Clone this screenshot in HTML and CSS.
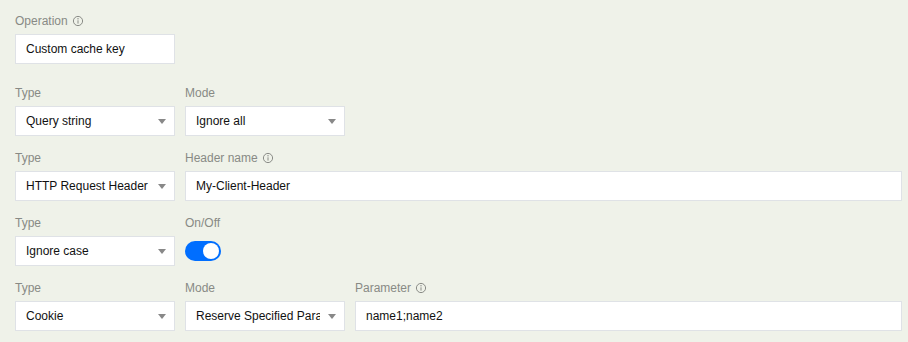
FILE: index.html
```html
<!DOCTYPE html>
<html>
<head>
<meta charset="utf-8">
<link rel="stylesheet" href="styles.css">
</head>
<body>
<div class="form">
  <div class="row row-op">
    <div class="field w160">
      <div class="label">Operation <svg class="info" viewBox="0 0 12 12"><circle cx="6" cy="6" r="4.6"/><line x1="6" y1="5.3" x2="6" y2="8.6"/><circle class="dot" cx="6" cy="3.7" r="0.7"/></svg></div>
      <div class="box">Custom cache key</div>
    </div>
  </div>

  <div class="row">
    <div class="field w160">
      <div class="label">Type</div>
      <div class="box select"><span class="val">Query string</span><span class="caret"></span></div>
    </div>
    <div class="field w160">
      <div class="label">Mode</div>
      <div class="box select"><span class="val">Ignore all</span><span class="caret"></span></div>
    </div>
  </div>

  <div class="row">
    <div class="field w160">
      <div class="label">Type</div>
      <div class="box select"><span class="val">HTTP Request Header</span><span class="caret"></span></div>
    </div>
    <div class="field grow">
      <div class="label">Header name <svg class="info" viewBox="0 0 12 12"><circle cx="6" cy="6" r="4.6"/><line x1="6" y1="5.3" x2="6" y2="8.6"/><circle class="dot" cx="6" cy="3.7" r="0.7"/></svg></div>
      <div class="box">My-Client-Header</div>
    </div>
  </div>

  <div class="row">
    <div class="field w160">
      <div class="label">Type</div>
      <div class="box select"><span class="val">Ignore case</span><span class="caret"></span></div>
    </div>
    <div class="field w160">
      <div class="label">On/Off</div>
      <div class="switch-wrap"><span class="switch"><span class="knob"></span></span></div>
    </div>
  </div>

  <div class="row">
    <div class="field w160">
      <div class="label">Type</div>
      <div class="box select"><span class="val">Cookie</span><span class="caret"></span></div>
    </div>
    <div class="field w160">
      <div class="label">Mode</div>
      <div class="box select"><span class="val">Reserve Specified Parameters</span><span class="caret"></span></div>
    </div>
    <div class="field grow">
      <div class="label">Parameter <svg class="info" viewBox="0 0 12 12"><circle cx="6" cy="6" r="4.6"/><line x1="6" y1="5.3" x2="6" y2="8.6"/><circle class="dot" cx="6" cy="3.7" r="0.7"/></svg></div>
      <div class="box">name1;name2</div>
    </div>
  </div>
</div>
</body>
</html>
```

FILE: styles.css
```css
html, body {
  margin: 0;
  padding: 0;
  background: #eff2e9;
  font-family: "Liberation Sans", Arial, Helvetica, sans-serif;
  font-size: 12px;
  color: #000;
}
.form {
  padding: 12px 6px 0 15px;
  display: flex;
  flex-direction: column;
  gap: 13px;
}
.row {
  display: flex;
  gap: 10px;
}
.row-op {
  margin-bottom: 7px;
}
.field {
  display: flex;
  flex-direction: column;
  gap: 4px;
}
.w160 { width: 160px; flex: none; }
.grow { flex: 1; min-width: 0; }
.label {
  height: 18px;
  line-height: 18px;
  color: #888a85;
  display: flex;
  align-items: center;
  gap: 4px;
}
.info {
  width: 12px;
  height: 12px;
  fill: none;
  stroke: #8a8c87;
  stroke-width: 1;
}
.info .dot { fill: #8a8c87; stroke: none; }
.box {
  box-sizing: border-box;
  height: 30px;
  background: #fff;
  border: 1px solid #dfe2e6;
  padding: 0 10px;
  line-height: 28px;
  white-space: nowrap;
  overflow: hidden;
  color: #111;
}
.select {
  display: flex;
  align-items: center;
  padding-right: 8px;
}
.select .val {
  flex: 1;
  min-width: 0;
  overflow: hidden;
  white-space: nowrap;
}
.caret {
  flex: none;
  width: 0;
  height: 0;
  margin-left: 8px;
  border-left: 4px solid transparent;
  border-right: 4px solid transparent;
  border-top: 5px solid #888;
}
.switch-wrap {
  height: 30px;
  display: flex;
  align-items: center;
}
.switch {
  width: 36px;
  height: 20px;
  border-radius: 10px;
  background: #006eff;
  display: flex;
  align-items: center;
  justify-content: flex-end;
  padding: 0 2px;
  box-sizing: border-box;
}
.knob {
  width: 16px;
  height: 16px;
  border-radius: 50%;
  background: #fff;
}
```
